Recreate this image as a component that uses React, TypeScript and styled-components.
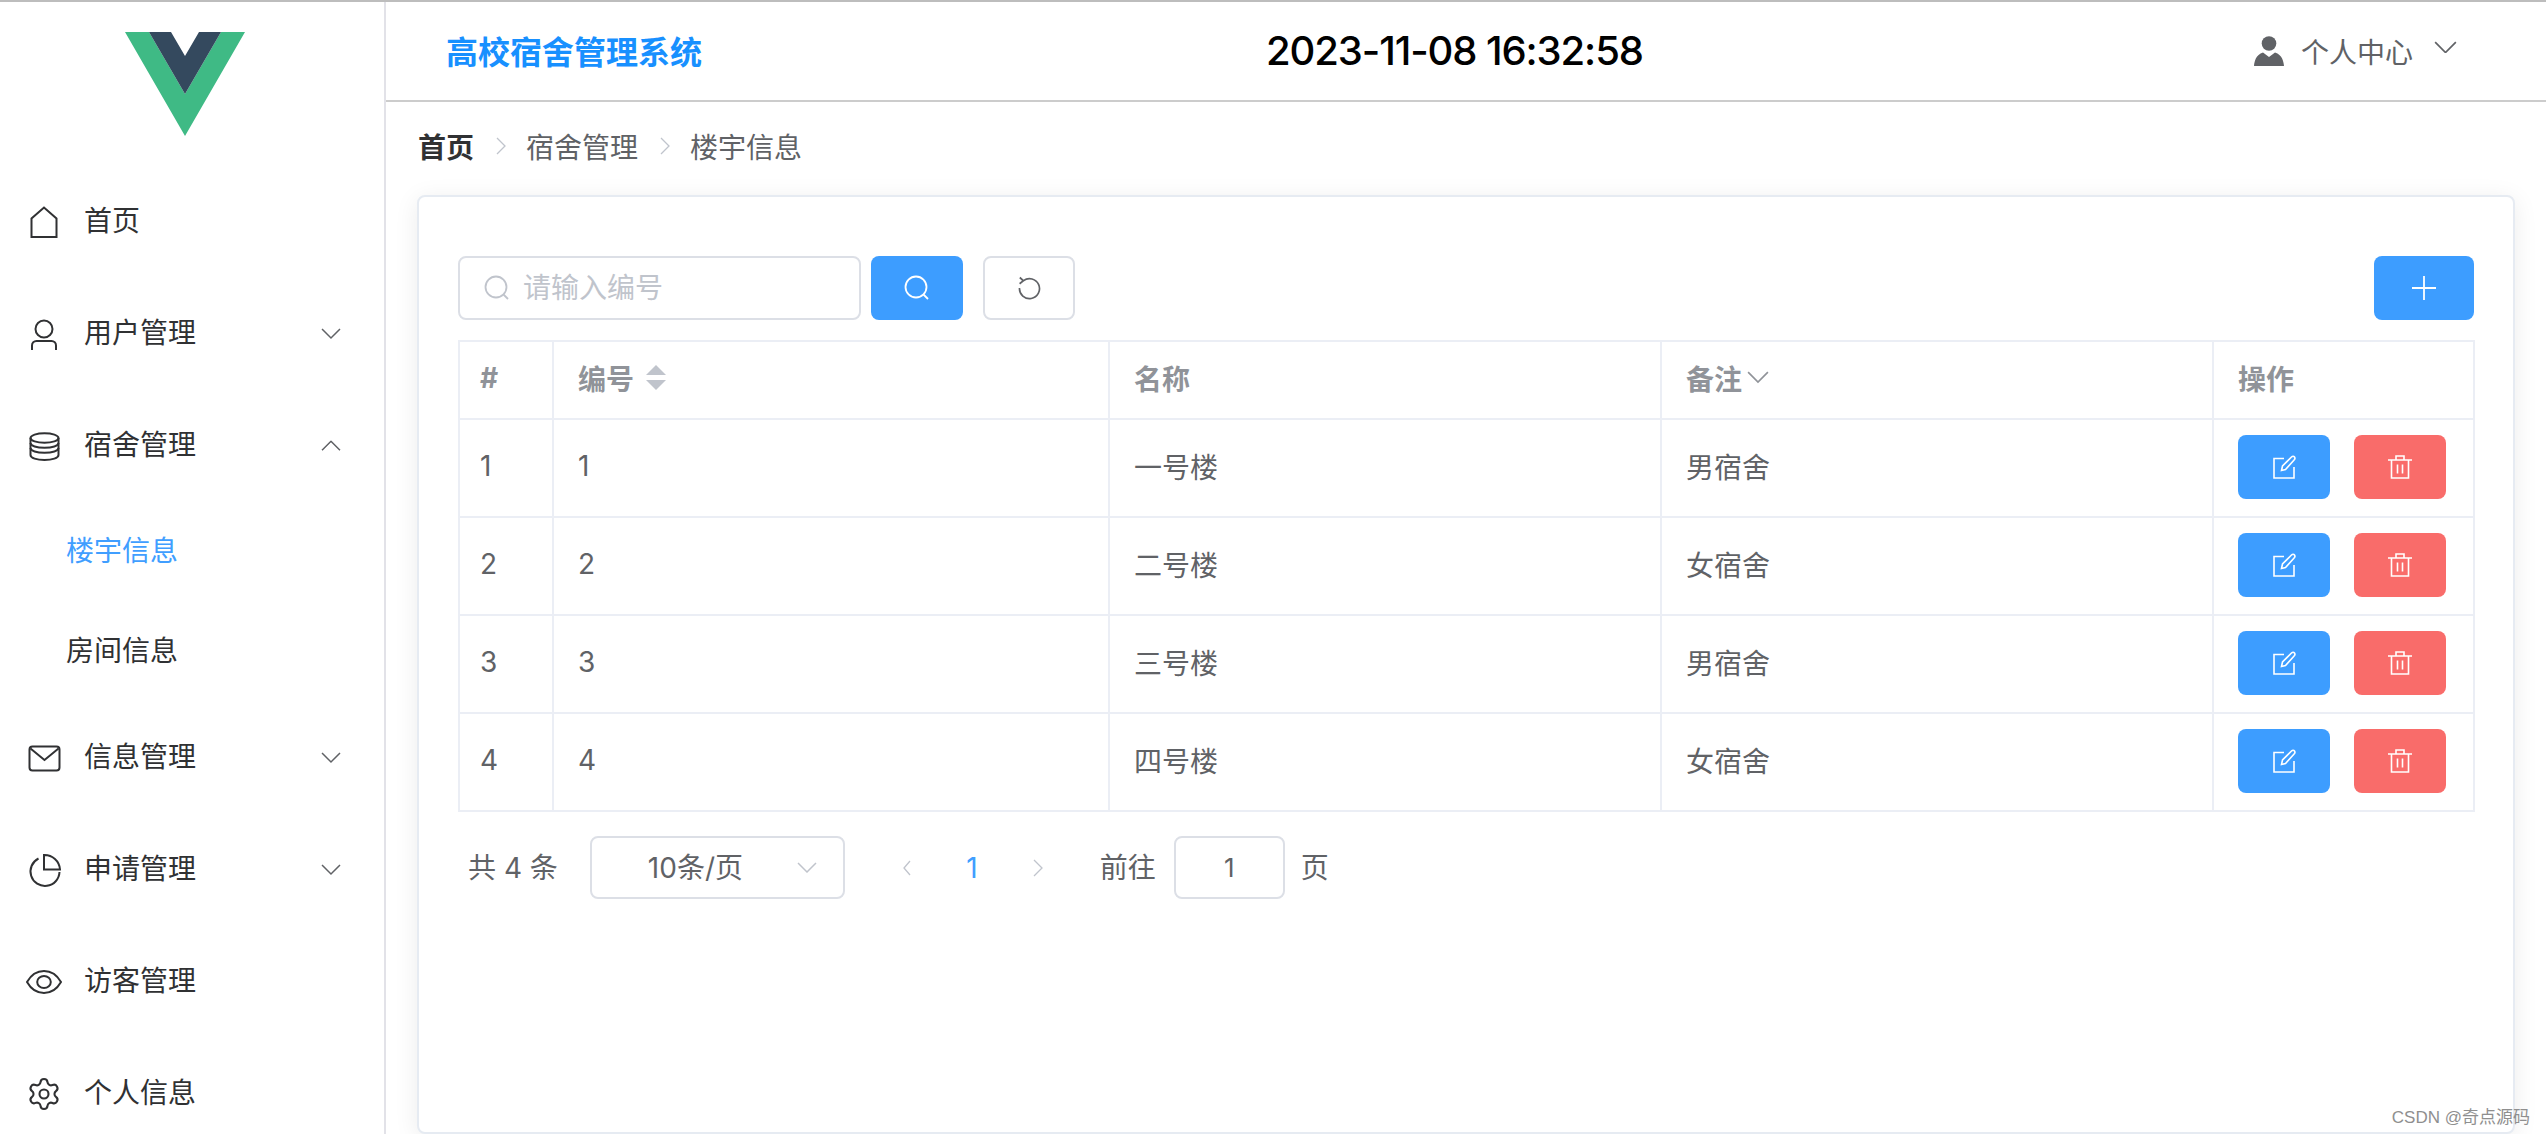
import * as React from 'react'
import styled, { createGlobalStyle } from 'styled-components'
import { Settings } from 'lucide-react'

const fontStack = `Inter, "Noto Sans CJK SC", "Noto Sans", sans-serif`
const blue = '#3d9dff'
const red = '#f96c6a'
const line = '#ebeef5'
const inputLine = '#dcdfe6'

const GlobalStyle = createGlobalStyle`
  html, body {
    margin: 0;
    height: 100%;
    overflow: hidden;
    background: #fff;
  }
  * {
    box-sizing: border-box;
  }
  body {
    font-family: ${fontStack};
  }
`

const Page = styled.div`
  position: relative;
  height: 1134px;
  display: flex;
  border-top: 2px solid #bdbdbd;
  overflow: hidden;
`

const Sidebar = styled.aside`
  flex: 0 0 386px;
  height: 1132px;
  border-right: 2px solid #e2e2e8;
  overflow: hidden;
`

const LogoBox = styled.div`
  height: 164px;
  padding: 30px 0 0 125px;
`

const MenuRow = styled.div<{ $active?: boolean; $sub?: boolean }>`
  height: ${p => (p.$sub ? 100 : 112)}px;
  display: flex;
  align-items: center;
  padding-left: ${p => (p.$sub ? 66 : 26)}px;
  padding-right: 43px;
  font-size: 28px;
  color: ${p => (p.$active ? '#409eff' : '#303133')};
`

const MenuIcon = styled.span`
  flex: 0 0 36px;
  height: 36px;
  margin-right: 22px;
  display: flex;
  align-items: center;
  justify-content: center;
  color: #303133;
`

const MenuLabel = styled.span`
  flex: 1;
  margin-bottom: 6px;
`

const Glyph = styled.svg<{ $size: number }>`
  display: block;
  flex: none;
  width: ${p => p.$size}px;
  height: ${p => p.$size}px;
  fill: none;
  stroke: currentColor;
`

const SolidGlyph = styled(Glyph)`
  fill: currentColor;
  stroke: none;
`

const ChevronSvg = styled.svg<{ $width: number; $up?: boolean; $color: string }>`
  display: block;
  flex: none;
  width: ${p => p.$width}px;
  height: ${p => p.$width * 0.56}px;
  fill: none;
  stroke: ${p => p.$color};
  transform: ${p => (p.$up ? 'rotate(180deg)' : 'none')};
`

const Main = styled.div`
  flex: 1;
  min-width: 0;
  display: flex;
  flex-direction: column;
`

const Header = styled.header`
  height: 100px;
  flex: none;
  display: flex;
  align-items: center;
  padding: 0 89px 0 60px;
  border-bottom: 2px solid #cccccc;
`

const Title = styled.div`
  flex: 0 0 820px;
  margin-bottom: 3px;
  font-size: 32px;
  font-weight: 700;
  color: #1890ff;
  white-space: nowrap;
`

const Clock = styled.div`
  font-size: 40px;
  font-weight: 500;
  letter-spacing: -1.1px;
  line-height: 1;
  color: #000;
  white-space: nowrap;
`

const UserMenu = styled.div`
  margin-left: auto;
  display: flex;
  align-items: center;
  color: #606266;
  font-size: 28px;
`

const UserName = styled.span`
  margin: 0 21px 0 17px;
`

const UserArrow = styled.span`
  margin-bottom: 8px;
`

const Crumbs = styled.nav`
  height: 93px;
  flex: none;
  display: flex;
  align-items: center;
  padding: 0 0 6px 32px;
  font-size: 28px;
  color: #606266;
`

const CrumbHome = styled.span`
  font-weight: 700;
  color: #303133;
`

const CrumbArrow = styled.span`
  margin: 0 16px 0 18px;
  display: flex;
  color: #c0c4cc;
`

const Card = styled.section`
  margin: 0 31px;
  height: 939px;
  padding: 59px 39px 0;
  background: #fff;
  border: 2px solid #e6ebf2;
  border-radius: 8px;
  box-shadow: 0 4px 24px rgba(0, 0, 0, 0.08);
`

const Toolbar = styled.div`
  display: flex;
  align-items: center;
  height: 64px;
  margin-bottom: 20px;
`

const SearchBox = styled.div`
  width: 403px;
  height: 64px;
  display: flex;
  align-items: center;
  gap: 13px;
  padding-left: 24px;
  margin-right: 10px;
  border: 2px solid ${inputLine};
  border-radius: 8px;
  color: #c0c4cc;
  font-size: 28px;
`

const Placeholder = styled.span`
  margin-bottom: 5px;
`

const Button = styled.button<{ $bg?: string; $width?: number }>`
  width: ${p => p.$width ?? 92}px;
  height: 64px;
  padding: 0;
  display: inline-flex;
  align-items: center;
  justify-content: center;
  border-radius: 8px;
  border: ${p => (p.$bg ? 'none' : `2px solid ${inputLine}`)};
  background: ${p => p.$bg ?? '#fff'};
  color: ${p => (p.$bg ? '#fff' : '#606266')};
`

const ResetButton = styled(Button)`
  margin-left: 20px;
`

const AddButton = styled(Button)`
  margin-left: auto;
`

const Table = styled.table`
  width: 2015px;
  table-layout: fixed;
  border-collapse: collapse;
  font-size: 28px;
  color: #606266;
  border: 2px solid ${line};
`

const HeadCell = styled.th<{ $pad?: number }>`
  height: 78px;
  padding: 0 0 5px ${p => p.$pad ?? 24}px;
  text-align: left;
  font-weight: 700;
  color: #909399;
  border: 2px solid ${line};
`

const HeadInner = styled.span`
  display: flex;
  align-items: center;
`

const NoteArrow = styled.span`
  margin-left: 5px;
`

const Cell = styled.td<{ $pad?: number }>`
  height: 98px;
  padding: 0 0 5px ${p => p.$pad ?? 24}px;
  border: 2px solid ${line};
`

const ActionCell = styled(Cell)`
  padding-bottom: 2px;
`

const RowActions = styled.div`
  display: flex;
  gap: 24px;
`

const SortCaret = styled.span`
  margin-left: 12px;
  display: flex;
  flex-direction: column;
  gap: 5px;
`

const Caret = styled.i<{ $up?: boolean }>`
  display: block;
  width: 0;
  height: 0;
  border-left: 10px solid transparent;
  border-right: 10px solid transparent;
  ${p => (p.$up ? 'border-bottom' : 'border-top')}: 10px solid #c0c4cc;
`

const Pagination = styled.div`
  margin-top: 24px;
  height: 63px;
  display: flex;
  align-items: center;
  padding-left: 10px;
  font-size: 28px;
  color: #606266;
`

const PagerText = styled.span`
  margin-bottom: 4px;
`

const SizeSelect = styled.div`
  width: 255px;
  height: 63px;
  margin: 0 53px 0 32px;
  padding: 0 26px 0 56px;
  display: flex;
  align-items: center;
  justify-content: space-between;
  border: 2px solid ${inputLine};
  border-radius: 8px;
`

const PageNav = styled.div`
  display: flex;
  align-items: center;
  color: #c0c4cc;
`

const PageNumber = styled.span`
  width: 40px;
  margin: 0 37px 0 36px;
  text-align: center;
  color: #409eff;
`

const GotoInput = styled.div`
  width: 111px;
  height: 63px;
  margin: 0 16px 0 18px;
  font-size: 26px;
  display: flex;
  align-items: center;
  justify-content: center;
  border: 2px solid ${inputLine};
  border-radius: 8px;
`

const GotoLabel = styled(PagerText)`
  margin-left: 53px;
`

const Watermark = styled.div`
  position: absolute;
  right: 16px;
  bottom: 6px;
  font-family: "Liberation Sans", "Noto Sans CJK SC", sans-serif;
  font-size: 17px;
  color: #8f8f8f;
`

const VueLogo = () => (
  <svg width="120" height="104" viewBox="0 0 120 104">
    <path d="M0 0h24l36 62L96 0h24L60 104z" fill="#3fba85" />
    <path d="M24 0h22l14 24L74 0h22L60 62z" fill="#34495e" />
  </svg>
)

const Chevron = ({ width = 20, up, color = '#606266' }: { width?: number; up?: boolean; color?: string }) => (
  <ChevronSvg $width={width} $up={up} $color={color} viewBox="0 0 20 11.2" strokeWidth={1.5}>
    <polyline points="1,1 10,10 19,1" />
  </ChevronSvg>
)

const SideArrow = ({ size = 18 }: { size?: number }) => (
  <Glyph $size={size} viewBox="0 0 18 18" strokeWidth={1.3}>
    <polyline points="5,1 13,9 5,17" />
  </Glyph>
)

const BackArrow = () => (
  <Glyph $size={18} viewBox="0 0 18 18" strokeWidth={1.3}>
    <polyline points="12,2 6,9 12,16" />
  </Glyph>
)

const HouseIcon = () => (
  <Glyph $size={36} viewBox="0 0 36 36" strokeWidth={2}>
    <path d="M5.5 33V14.5L18 3.5l12.5 11V33z" />
  </Glyph>
)

const UserIcon = () => (
  <Glyph $size={36} viewBox="0 0 36 36" strokeWidth={2}>
    <circle cx="18" cy="13" r="8.5" />
    <path d="M6 34v-4.500a4.500 4.500 0 0 1 4.500-4.500h15a4.500 4.500 0 0 1 4.500 4.500V34" />
  </Glyph>
)

const CoinIcon = () => (
  <Glyph $size={36} viewBox="0 0 36 36" strokeWidth={2}>
    <ellipse cx="18.500" cy="10" rx="14" ry="4.800" />
    <path d="M4.500 10v5c0 3 6.300 4.800 14 4.800s14-1.800 14-4.800v-5" />
    <path d="M4.500 15v5c0 3 6.300 4.800 14 4.800s14-1.800 14-4.800v-5" />
    <path d="M4.500 20v7c0 3 6.300 5 14 5s14-2 14-5v-7" />
  </Glyph>
)

const MailIcon = () => (
  <Glyph $size={36} viewBox="0 0 36 36" strokeWidth={2}>
    <rect x="3.500" y="6.500" width="30" height="24" rx="3" />
    <path d="M4.500 8.500L18.500 20l14-11.500" />
  </Glyph>
)

const PieIcon = () => (
  <Glyph $size={36} viewBox="0 0 36 36" strokeWidth={2}>
    <path d="M18 3a15.500 15.500 0 0 1 16 14.500H18z" />
    <path d="M12.500 6.500a14.500 14.500 0 1 0 21 13.500" />
  </Glyph>
)

const EyeIcon = () => (
  <Glyph $size={36} viewBox="0 0 36 36" strokeWidth={2}>
    <path d="M1 18C5 11 11 7 18 7s13 4 17 11c-4 7-10 11-17 11S5 25 1 18z" />
    <ellipse cx="18" cy="18" rx="6.800" ry="6" />
  </Glyph>
)

const PersonIcon = () => (
  <SolidGlyph $size={30} viewBox="0 0 30 30">
    <circle cx="15" cy="7.500" r="7.300" />
    <path d="M0 30c.5-5 1.800-11 9-13.500l6 4.500 6-4.500c7.200 2.500 8.500 8.500 9 13.500z" />
  </SolidGlyph>
)

const SearchIcon = () => (
  <Glyph $size={26} viewBox="0 0 26 26" strokeWidth={1.8}>
    <circle cx="12" cy="12" r="10.500" />
    <path d="M19.500 19.500L24 24" />
  </Glyph>
)

const ResetIcon = () => (
  <Glyph $size={24} viewBox="0 0 24 24" strokeWidth={1.7}>
    <path d="M6.500 4.600A10 10 0 1 1 2.500 12" />
    <path d="M2.800 1.500l3.600 3.300-3.800 2.900" />
  </Glyph>
)

const PlusIcon = () => (
  <Glyph $size={24} viewBox="0 0 24 24" strokeWidth={1.8}>
    <path d="M12 0v24M0 12h24" />
  </Glyph>
)

const EditIcon = () => (
  <Glyph $size={24} viewBox="0 0 24 24" strokeWidth={1.6}>
    <path d="M12 3.500H2V23h20V12" />
    <path d="M9.500 15.500l1-4.500L19.500 2c1-1 2.300-1 3 0s.6 2-.4 3l-8.600 9.500z" />
  </Glyph>
)

const TrashIcon = () => (
  <Glyph $size={24} viewBox="0 0 24 24" strokeWidth={1.6}>
    <path d="M0 5h24M8 5V1h8v4M3.500 5v18h17V5M9.500 9.500v9M14.500 9.500v9" />
  </Glyph>
)

const menu = [
  { label: '首页', icon: <HouseIcon /> },
  { label: '用户管理', icon: <UserIcon />, arrow: 'down' },
  { label: '宿舍管理', icon: <CoinIcon />, arrow: 'up' },
  { label: '楼宇信息', sub: true, active: true },
  { label: '房间信息', sub: true },
  { label: '信息管理', icon: <MailIcon />, arrow: 'down' },
  { label: '申请管理', icon: <PieIcon />, arrow: 'down' },
  { label: '访客管理', icon: <EyeIcon /> },
  { label: '个人信息', icon: <Settings size={36} strokeWidth={1.4} /> },
]

const buildings = [
  { id: 1, name: '一号楼', note: '男宿舍' },
  { id: 2, name: '二号楼', note: '女宿舍' },
  { id: 3, name: '三号楼', note: '男宿舍' },
  { id: 4, name: '四号楼', note: '女宿舍' },
]

const App: React.FC = () => (
  <Page>
    <GlobalStyle />
    <Sidebar>
      <LogoBox>
        <VueLogo />
      </LogoBox>
      {menu.map(item => (
        <MenuRow key={item.label} $sub={item.sub} $active={item.active}>
          {item.icon && <MenuIcon>{item.icon}</MenuIcon>}
          <MenuLabel>{item.label}</MenuLabel>
          {item.arrow && <Chevron up={item.arrow === 'up'} />}
        </MenuRow>
      ))}
    </Sidebar>
    <Main>
      <Header>
        <Title>高校宿舍管理系统</Title>
        <Clock>2023-11-08 16:32:58</Clock>
        <UserMenu>
          <PersonIcon />
          <UserName>个人中心</UserName>
          <UserArrow>
            <Chevron width={23} />
          </UserArrow>
        </UserMenu>
      </Header>
      <Crumbs>
        <CrumbHome>首页</CrumbHome>
        <CrumbArrow>
          <SideArrow />
        </CrumbArrow>
        <span>宿舍管理</span>
        <CrumbArrow>
          <SideArrow />
        </CrumbArrow>
        <span>楼宇信息</span>
      </Crumbs>
      <Card>
        <Toolbar>
          <SearchBox>
            <SearchIcon />
            <Placeholder>请输入编号</Placeholder>
          </SearchBox>
          <Button $bg={blue}>
            <SearchIcon />
          </Button>
          <ResetButton>
            <ResetIcon />
          </ResetButton>
          <AddButton $bg={blue} $width={100}>
            <PlusIcon />
          </AddButton>
        </Toolbar>
        <Table>
          <colgroup>
            <col width={94} />
            <col width={556} />
            <col width={552} />
            <col width={552} />
            <col width={261} />
          </colgroup>
          <thead>
            <tr>
              <HeadCell $pad={20}>#</HeadCell>
              <HeadCell>
                <HeadInner>
                  编号
                  <SortCaret>
                    <Caret $up />
                    <Caret />
                  </SortCaret>
                </HeadInner>
              </HeadCell>
              <HeadCell>名称</HeadCell>
              <HeadCell>
                <HeadInner>
                  备注
                  <NoteArrow>
                    <Chevron width={22} color="#909399" />
                  </NoteArrow>
                </HeadInner>
              </HeadCell>
              <HeadCell>操作</HeadCell>
            </tr>
          </thead>
          <tbody>
            {buildings.map(b => (
              <tr key={b.id}>
                <Cell $pad={20}>{b.id}</Cell>
                <Cell>{b.id}</Cell>
                <Cell>{b.name}</Cell>
                <Cell>{b.note}</Cell>
                <ActionCell>
                  <RowActions>
                    <Button $bg={blue}>
                      <EditIcon />
                    </Button>
                    <Button $bg={red}>
                      <TrashIcon />
                    </Button>
                  </RowActions>
                </ActionCell>
              </tr>
            ))}
          </tbody>
        </Table>
        <Pagination>
          <PagerText>共 4 条</PagerText>
          <SizeSelect>
            <PagerText>10条/页</PagerText>
            <Chevron color="#c0c4cc" />
          </SizeSelect>
          <PageNav>
            <BackArrow />
            <PageNumber>1</PageNumber>
            <SideArrow />
          </PageNav>
          <GotoLabel>前往</GotoLabel>
          <GotoInput>1</GotoInput>
          <PagerText>页</PagerText>
        </Pagination>
      </Card>
    </Main>
    <Watermark>CSDN @奇点源码</Watermark>
  </Page>
)

export default App
